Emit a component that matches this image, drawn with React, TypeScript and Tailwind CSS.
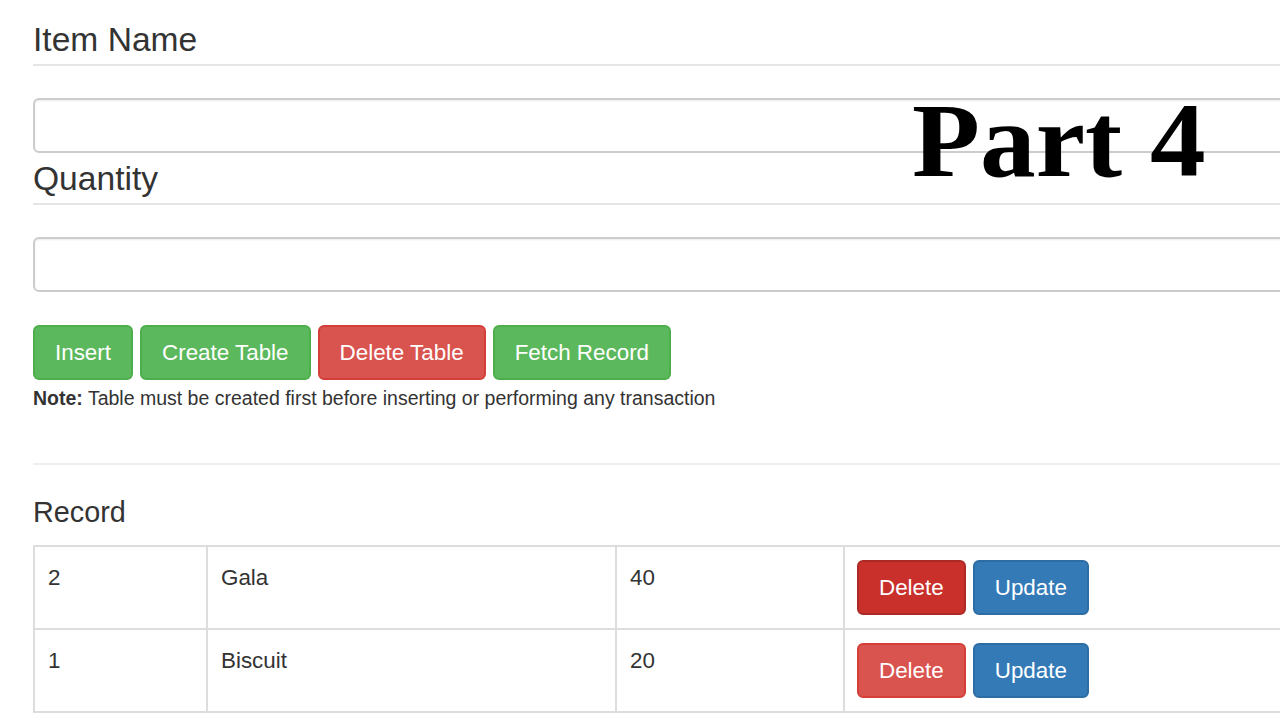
import React from 'react'

const font = "font-['Liberation_Sans',Arial,sans-serif]"

const Legend: React.FC<{ label: string }> = ({ label }) => (
  <div className="text-[33.6px] leading-[48px] text-[#333] border-b-2 border-[#e5e5e5]">{label}</div>
)

const Field: React.FC = () => (
  <input
    type="text"
    className="block w-full h-[55px] mt-[32px] mb-[2px] border-2 border-[#ccc] rounded-[6px] bg-white shadow-[inset_0_1px_2px_rgba(0,0,0,0.08)] outline-none"
  />
)

const btn = 'h-[55px] px-[20px] text-[22.4px] text-white rounded-[6px] border-2'

const records = [
  { id: 2, name: 'Gala', qty: 40, active: true },
  { id: 1, name: 'Biscuit', qty: 20, active: false },
]

export default function App() {
  return (
    <div className={`relative w-[1280px] h-[720px] overflow-hidden bg-white ${font}`}>
      <div className="w-[1400px] pl-[33px] pt-[16px]">
        <Legend label="Item Name" />
        <Field />
        <Legend label="Quantity" />
        <Field />

        <div className="flex gap-[7px] mt-[33px]">
          <button className={`${btn} bg-[#5cb85c] border-[#4cae4c]`}>Insert</button>
          <button className={`${btn} bg-[#5cb85c] border-[#4cae4c]`}>Create Table</button>
          <button className={`${btn} bg-[#d9534f] border-[#d43f3a]`}>Delete Table</button>
          <button className={`${btn} bg-[#5cb85c] border-[#4cae4c]`}>Fetch Record</button>
        </div>
        <p className="mt-[4px] text-[19.5px] leading-[28px] text-[#333]">
          <b>Note:</b> Table must be created first before inserting or performing any transaction
        </p>

        <hr className="mt-[51px] border-0 border-t-2 border-[#eee]" />

        <h4 className="mt-[29px] text-[28.8px] leading-[36px] text-[#333]">Record</h4>

        <table className="mt-[15px] w-full border-collapse text-[22.4px] text-[#333]">
          <tbody>
            {records.map((r) => (
              <tr key={r.id}>
                <td className="w-[173px] h-[83px] align-top px-[13px] py-[14px] border-2 border-[#ddd]">{r.id}</td>
                <td className="w-[409px] align-top px-[13px] py-[14px] border-2 border-[#ddd]">{r.name}</td>
                <td className="w-[228px] align-top px-[13px] py-[14px] border-2 border-[#ddd]">{r.qty}</td>
                <td className="align-top px-[12px] py-[13px] border-2 border-[#ddd]">
                  <div className="flex gap-[7px]">
                    <button
                      className={`${btn} ${r.active ? 'bg-[#c9302c] border-[#ac2925]' : 'bg-[#d9534f] border-[#d43f3a]'}`}
                    >
                      Delete
                    </button>
                    <button className={`${btn} bg-[#337ab7] border-[#2e6da4]`}>Update</button>
                  </div>
                </td>
              </tr>
            ))}
          </tbody>
        </table>
      </div>

      <div className="absolute left-[912px] top-[76px] origin-left scale-x-[1.05] font-['Liberation_Serif','Times_New_Roman',serif] font-bold text-[106px] leading-[130px] text-black">
        Part 4
      </div>
    </div>
  )
}
